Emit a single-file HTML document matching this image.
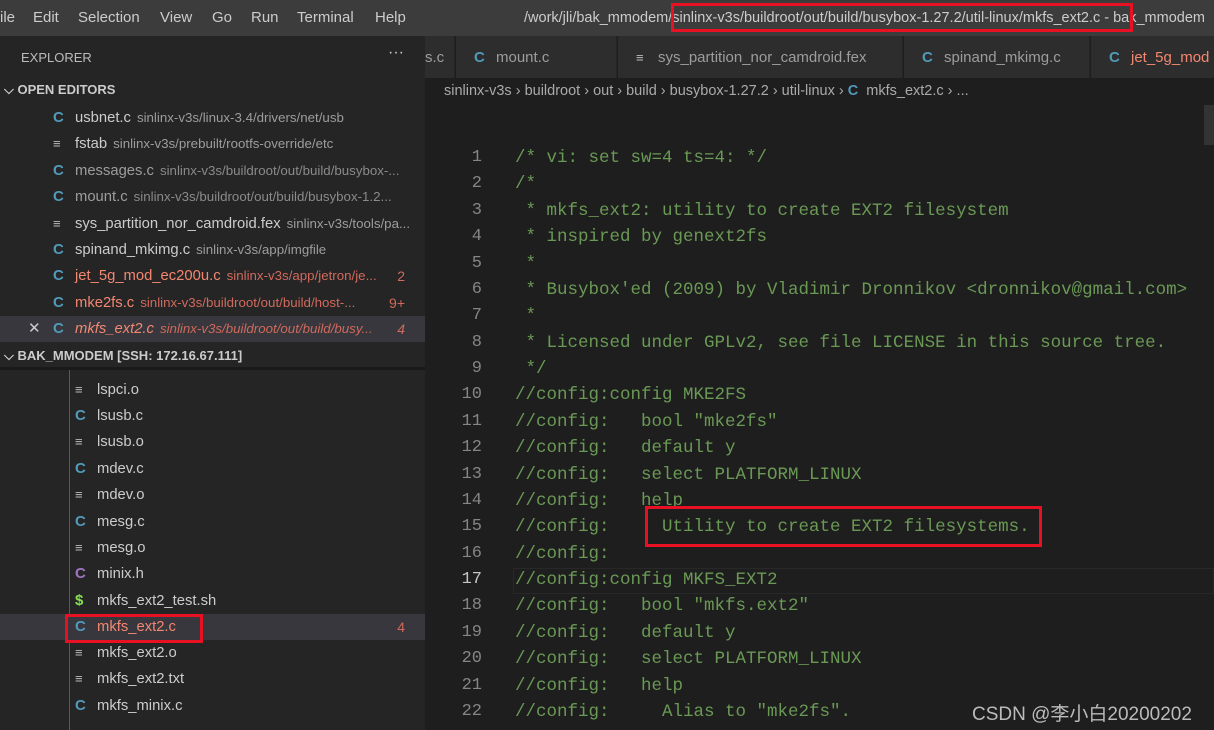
<!DOCTYPE html>
<html><head><meta charset="utf-8"><style>
*{margin:0;padding:0;box-sizing:border-box}
body{width:1214px;height:730px;overflow:hidden;background:#1e1e1e;font-family:"Liberation Sans","Noto Sans CJK SC",sans-serif;position:relative;color:#ccc}
.abs{position:absolute;white-space:nowrap}
#title{left:0;top:0;width:1214px;height:36px;background:#3c3c3c}
#title span{position:absolute;top:9px;font-size:15px;color:#ccc}
#side{left:0;top:36px;width:425px;height:694px;background:#252526}
.row{position:absolute;left:0;width:425px;height:26px;font-size:14.8px;line-height:26px;color:#ccc}
.row .d{color:#9d9d9d;font-size:13.3px;margin-left:6px}
.ci{display:inline-block;width:22px;color:#519aba;font-weight:bold;font-size:15px}
.li{display:inline-block;width:22px;color:#bbb;font-size:13px}
.red{color:#f48771}.red .d{color:#d06a5c}
.num{position:absolute;right:20px;top:0;color:#d06a5c;font-size:14px}
.tab{position:absolute;top:36px;height:42px;background:#2d2d2d;border-right:1px solid #252526;font-size:15px;line-height:43px;color:#9d9d9d;padding-left:18px}
.ln{position:absolute;left:440px;width:42px;text-align:right;font-family:"Liberation Mono",monospace;font-size:17px;color:#858585}
.cd{position:absolute;left:515px;font-family:"Liberation Mono",monospace;font-size:17.5px;color:#6a9955;white-space:pre}
.box{position:absolute;border:3px solid #e81123}
</style></head><body>
<div id="title" class="abs">
<span style="left:0">ile</span><span style="left:33px">Edit</span><span style="left:78px">Selection</span><span style="left:160px">View</span><span style="left:212px">Go</span><span style="left:251px">Run</span><span style="left:297px">Terminal</span><span style="left:375px">Help</span>
<span style="left:524px;font-size:14.5px;top:10px">/work/jli/bak_mmodem/sinlinx-v3s/buildroot/out/build/busybox-1.27.2/util-linux/mkfs_ext2.c - bak_mmodem</span>
</div>
<div class="box" style="left:671px;top:3px;width:462px;height:29px"></div>
<div id="side" class="abs">
<div class="abs" style="left:21px;top:14px;font-size:13px;color:#bbb">EXPLORER</div>
<div class="abs" style="left:388px;top:8px;font-size:16px;color:#ccc">···</div>
<div class="abs" style="left:4px;top:46px;font-size:13px;font-weight:bold;color:#ccc">⌵ OPEN EDITORS</div>
</div>
<div class="row" style="top:105px;padding-left:53px"><span class="ci">C</span>usbnet.c<span class="d">sinlinx-v3s/linux-3.4/drivers/net/usb</span></div>
<div class="row" style="top:131px;padding-left:53px"><span class="li">≡</span>fstab<span class="d">sinlinx-v3s/prebuilt/rootfs-override/etc</span></div>
<div class="row" style="top:158px;padding-left:53px;color:#9d9d9d"><span class="ci">C</span>messages.c<span class="d" style="color:#8a8a8a">sinlinx-v3s/buildroot/out/build/busybox-...</span></div>
<div class="row" style="top:184px;padding-left:53px;color:#9d9d9d"><span class="ci">C</span>mount.c<span class="d" style="color:#8a8a8a">sinlinx-v3s/buildroot/out/build/busybox-1.2...</span></div>
<div class="row" style="top:211px;padding-left:53px"><span class="li">≡</span>sys_partition_nor_camdroid.fex<span class="d">sinlinx-v3s/tools/pa...</span></div>
<div class="row" style="top:237px;padding-left:53px"><span class="ci">C</span>spinand_mkimg.c<span class="d">sinlinx-v3s/app/imgfile</span></div>
<div class="row red" style="top:263px;padding-left:53px"><span class="ci">C</span>jet_5g_mod_ec200u.c<span class="d">sinlinx-v3s/app/jetron/je...</span><span class="num">2</span></div>
<div class="row red" style="top:290px;padding-left:53px"><span class="ci">C</span>mke2fs.c<span class="d">sinlinx-v3s/buildroot/out/build/host-...</span><span class="num">9+</span></div>
<div class="row red" style="top:316px;padding-left:28px;background:#37373d;font-style:italic"><span style="color:#ccc;display:inline-block;width:25px;font-style:normal">✕</span><span class="ci" style="font-style:normal">C</span>mkfs_ext2.c<span class="d">sinlinx-v3s/buildroot/out/build/busy...</span><span class="num">4</span></div>
<div class="abs" style="left:4px;top:348px;font-size:13px;font-weight:bold;color:#ccc">⌵ BAK_MMODEM [SSH: 172.16.67.111]</div>
<div class="abs" style="left:0;top:367px;width:425px;height:3px;background:#1a1a1a"></div>
<div class="abs" style="left:69px;top:370px;width:1px;height:360px;background:#585858"></div>
<div class="row" style="top:377px;padding-left:75px"><span class="li">≡</span>lspci.o</div>
<div class="row" style="top:403px;padding-left:75px"><span class="ci">C</span>lsusb.c</div>
<div class="row" style="top:429px;padding-left:75px"><span class="li">≡</span>lsusb.o</div>
<div class="row" style="top:456px;padding-left:75px"><span class="ci">C</span>mdev.c</div>
<div class="row" style="top:482px;padding-left:75px"><span class="li">≡</span>mdev.o</div>
<div class="row" style="top:509px;padding-left:75px"><span class="ci">C</span>mesg.c</div>
<div class="row" style="top:535px;padding-left:75px"><span class="li">≡</span>mesg.o</div>
<div class="row" style="top:561px;padding-left:75px"><span class="ci" style="color:#a074c4">C</span>minix.h</div>
<div class="row" style="top:588px;padding-left:75px"><span class="ci" style="color:#89e051">$</span>mkfs_ext2_test.sh</div>
<div class="row red" style="top:614px;padding-left:75px;background:#37373d"><span class="ci">C</span>mkfs_ext2.c<span class="num">4</span></div>
<div class="row" style="top:640px;padding-left:75px"><span class="li">≡</span>mkfs_ext2.o</div>
<div class="row" style="top:666px;padding-left:75px"><span class="li">≡</span>mkfs_ext2.txt</div>
<div class="row" style="top:693px;padding-left:75px"><span class="ci">C</span>mkfs_minix.c</div>
<div class="box" style="left:65px;top:614px;width:138px;height:29px"></div>
<div class="tab" style="left:425px;width:30px;padding-left:0">s.c</div>
<div class="tab" style="left:456px;width:161px"><span class="ci" style="width:22px">C</span>mount.c</div>
<div class="tab" style="left:618px;width:285px"><span class="li">≡</span>sys_partition_nor_camdroid.fex</div>
<div class="tab" style="left:904px;width:186px"><span class="ci">C</span>spinand_mkimg.c</div>
<div class="tab" style="left:1091px;width:130px;color:#f48771"><span class="ci">C</span>jet_5g_mod</div>
<div class="abs" style="left:444px;top:83px;font-size:14.5px;color:#aaa">sinlinx-v3s › buildroot › out › build › busybox-1.27.2 › util-linux › <span style="color:#519aba;font-weight:bold">C</span>&nbsp; mkfs_ext2.c › ...</div>
<div class="abs" style="left:1204px;top:105px;width:10px;height:40px;background:#333"></div>
<div class="abs" style="left:513px;top:568px;width:701px;height:26px;border:1px solid #282828"></div>
<div class="ln" style="top:148px">1</div><div class="cd" style="top:148px">/* vi: set sw=4 ts=4: */</div>
<div class="ln" style="top:174px">2</div><div class="cd" style="top:174px">/*</div>
<div class="ln" style="top:201px">3</div><div class="cd" style="top:201px"> * mkfs_ext2: utility to create EXT2 filesystem</div>
<div class="ln" style="top:227px">4</div><div class="cd" style="top:227px"> * inspired by genext2fs</div>
<div class="ln" style="top:254px">5</div><div class="cd" style="top:254px"> *</div>
<div class="ln" style="top:280px">6</div><div class="cd" style="top:280px"> * Busybox'ed (2009) by Vladimir Dronnikov &lt;dronnikov@gmail.com&gt;</div>
<div class="ln" style="top:306px">7</div><div class="cd" style="top:306px"> *</div>
<div class="ln" style="top:333px">8</div><div class="cd" style="top:333px"> * Licensed under GPLv2, see file LICENSE in this source tree.</div>
<div class="ln" style="top:359px">9</div><div class="cd" style="top:359px"> */</div>
<div class="ln" style="top:385px">10</div><div class="cd" style="top:385px">//config:config MKE2FS</div>
<div class="ln" style="top:412px">11</div><div class="cd" style="top:412px">//config:   bool "mke2fs"</div>
<div class="ln" style="top:438px">12</div><div class="cd" style="top:438px">//config:   default y</div>
<div class="ln" style="top:465px">13</div><div class="cd" style="top:465px">//config:   select PLATFORM_LINUX</div>
<div class="ln" style="top:491px">14</div><div class="cd" style="top:491px">//config:   help</div>
<div class="ln" style="top:517px">15</div><div class="cd" style="top:517px">//config:     Utility to create EXT2 filesystems.</div>
<div class="ln" style="top:544px">16</div><div class="cd" style="top:544px">//config:</div>
<div class="ln" style="top:570px;color:#c6c6c6">17</div><div class="cd" style="top:570px">//config:config MKFS_EXT2</div>
<div class="ln" style="top:596px">18</div><div class="cd" style="top:596px">//config:   bool "mkfs.ext2"</div>
<div class="ln" style="top:623px">19</div><div class="cd" style="top:623px">//config:   default y</div>
<div class="ln" style="top:649px">20</div><div class="cd" style="top:649px">//config:   select PLATFORM_LINUX</div>
<div class="ln" style="top:676px">21</div><div class="cd" style="top:676px">//config:   help</div>
<div class="ln" style="top:702px">22</div><div class="cd" style="top:702px">//config:     Alias to "mke2fs".</div>
<div class="box" style="left:645px;top:506px;width:397px;height:41px"></div>
<div class="abs" style="left:972px;top:699px;font-size:19px;color:#bbb">CSDN @李小白20200202</div>
</body></html>
